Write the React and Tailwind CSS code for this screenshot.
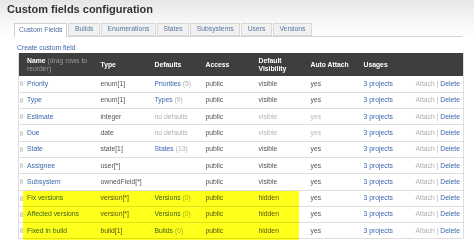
import React from "react";

const rows = [
  { name: "Priority", type: "enum[1]", def: "Priorities", count: "(5)", vis: "visible" },
  { name: "Type", type: "enum[1]", def: "Types", count: "(9)", vis: "visible" },
  { name: "Estimate", type: "integer", none: true, vis: "visible", dim: true },
  { name: "Due", type: "date", none: true, vis: "visible", dim: true },
  { name: "State", type: "state[1]", def: "States", count: "(13)", vis: "visible" },
  { name: "Assignee", type: "user[*]", vis: "visible" },
  { name: "Subsystem", type: "ownedField[*]", vis: "visible" },
  { name: "Fix versions", type: "version[*]", def: "Versions", count: "(0)", vis: "hidden" },
  { name: "Affected versions", type: "version[*]", def: "Versions", count: "(0)", vis: "hidden" },
  { name: "Fixed in build", type: "build[1]", def: "Builds", count: "(0)", vis: "hidden" },
];

const tabs = ["Custom Fields", "Builds", "Enumerations", "States", "Subsystems", "Users", "Versions"];

const Grip = () => (
  <svg width="3" height="5" viewBox="0 0 3 5" className="shrink-0">
    <rect x="0" y="0" width="3" height="5" fill="#e4e4e4" />
    <rect x="0" y="0.5" width="1" height="1" fill="#c4c4c4" />
    <rect x="2" y="0.5" width="1" height="1" fill="#c4c4c4" />
    <rect x="0" y="2" width="1" height="1" fill="#c4c4c4" />
    <rect x="2" y="2" width="1" height="1" fill="#c4c4c4" />
    <rect x="0" y="3.5" width="1" height="1" fill="#c4c4c4" />
    <rect x="2" y="3.5" width="1" height="1" fill="#c4c4c4" />
  </svg>
);

const App = () => {
  return (
    <div
      className="relative w-[474px] h-[252px] overflow-hidden bg-white text-[6.8px] text-[#555]"
      style={{ fontFamily: '"Liberation Sans", Arial, sans-serif' }}
    >
      {/* header band */}
      <div className="bg-gradient-to-b from-[#e6e6e6] via-[#f6f6f6] to-white pt-[3px] h-[38px]">
        <h1 className="pl-[7px] text-[11px] leading-[13px] font-bold text-[#333]">
          Custom fields configuration
        </h1>
        <div className="ml-[14px] mr-[12px] mt-[7px] flex h-[14px] border-b border-[#d4d4d4]">
          {tabs.map((t, i) => (
            <div
              key={t}
              className={
                i === 0
                  ? "flex items-center px-[4px] bg-white border border-b-0 border-[#d0d0d0] text-[#4a6a9c] -mb-px"
                  : "flex items-center px-[5.5px] ml-[1px] bg-[#f1f1f1] border border-[#d8d8d8] text-[#5a76a4]"
              }
            >
              {t}
            </div>
          ))}
        </div>
      </div>

      <div className="pl-[17px] mt-[6px] leading-[8px] text-[#3a67b0]">Create custom field</div>

      <table className="ml-[18px] mt-[1px] w-[445px] table-fixed border-collapse border-l border-r border-[#dcdcdc]">
        <colgroup>
          <col className="w-[80px]" />
          <col className="w-[54px]" />
          <col className="w-[51px]" />
          <col className="w-[53px]" />
          <col className="w-[52px]" />
          <col className="w-[53px]" />
          <col className="w-[49px]" />
          <col className="w-[53px]" />
        </colgroup>
        <thead>
          <tr className="h-[23px] bg-[#3e3e3e] text-white text-left align-middle leading-[8px]">
            <th className="pl-[8px] pr-[2px] font-normal">
              <span className="font-bold">Name</span> <span className="text-[#9a9a9a]">(drag rows to</span>
              <br />
              <span className="text-[#9a9a9a]">reorder)</span>
            </th>
            <th className="pl-[2px] font-bold">Type</th>
            <th className="pl-[2px] font-bold">Defaults</th>
            <th className="pl-[2px] font-bold">Access</th>
            <th className="pl-[2px] font-bold">
              Default
              <br />
              Visibility
            </th>
            <th className="pl-[2px] font-bold">Auto Attach</th>
            <th className="pl-[2px] font-bold">Usages</th>
            <th></th>
          </tr>
        </thead>
        <tbody>
          {rows.map((r) => (
            <tr key={r.name} className="h-[16.3px] border-b border-[#dedede] align-middle">
              <td className="pl-[1px]">
                <div className="flex items-center gap-[4px]">
                  <Grip />
                  <span className="text-[#3a67b0]">{r.name}</span>
                </div>
              </td>
              <td className="pl-[2px] text-[#555]">{r.type}</td>
              <td className="pl-[2px]">
                {r.none ? (
                  <span className="text-[#b0b0b0]">no defaults</span>
                ) : r.def ? (
                  <>
                    <span className="text-[#3a67b0]">{r.def}</span>{" "}
                    <span className="text-[#b0b0b0]">{r.count}</span>
                  </>
                ) : null}
              </td>
              <td className="pl-[2px] text-[#555]">public</td>
              <td className={r.dim ? "pl-[2px] text-[#b8b8b8]" : "pl-[2px] text-[#555]"}>{r.vis}</td>
              <td className={r.dim ? "pl-[2px] text-[#b8b8b8]" : "pl-[2px] text-[#555]"}>yes</td>
              <td className="pl-[2px] text-[#3a67b0]">3 projects</td>
              <td className="pr-[3px] text-right">
                <span className="text-[#b0b0b0]">Attach | </span>
                <span className="text-[#3a67b0]">Delete</span>
              </td>
            </tr>
          ))}
        </tbody>
      </table>

      {/* highlighter annotation */}
      <div className="absolute left-[23px] top-[191px] w-[276px] h-[49px] bg-[#ffff1c] mix-blend-multiply rounded-[1px]" />
    </div>
  );
};

export default App;
